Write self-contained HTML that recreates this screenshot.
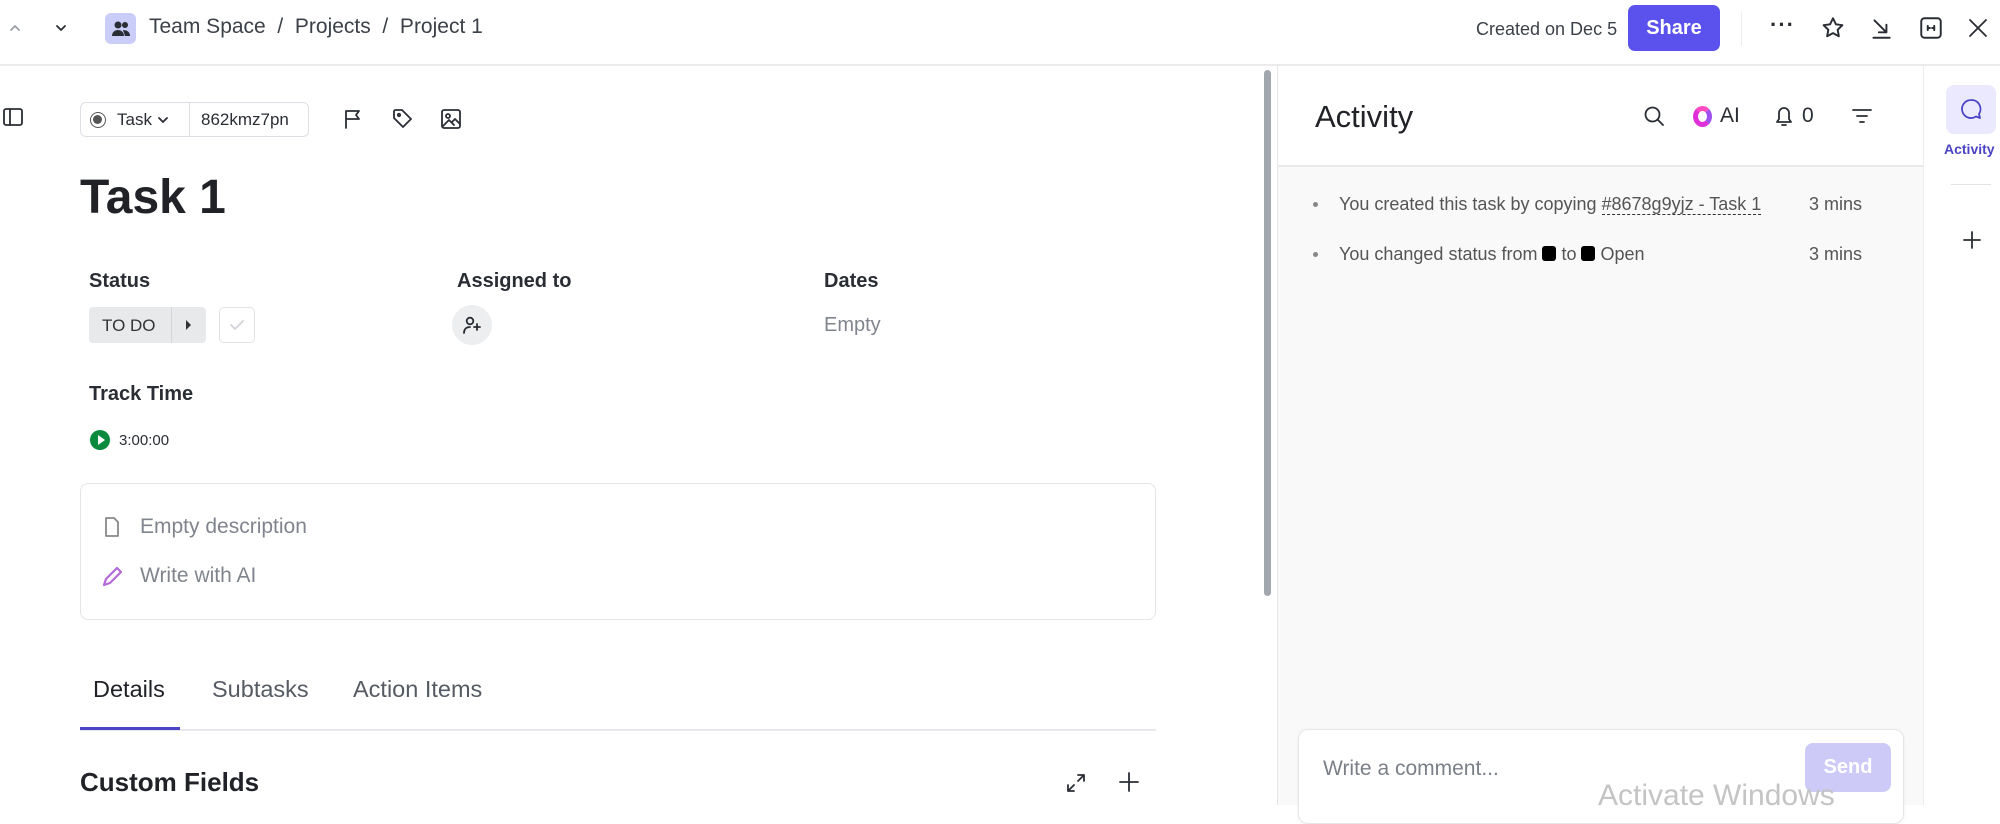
<!DOCTYPE html>
<html><head><meta charset="utf-8"><style>
*{box-sizing:border-box;margin:0;padding:0}
body{width:2000px;height:805px;overflow:hidden;background:#fff;font-family:"Liberation Sans",sans-serif;color:#2a2e34;position:relative}
.a{position:absolute}
.t{white-space:nowrap}
svg{position:absolute;fill:none;stroke:#2a2e34;stroke-width:1.8;stroke-linecap:round;stroke-linejoin:round}
</style></head><body>
<div class="a" style="left:0;top:64px;width:2000px;height:2px;background:#ebebeb"></div>
<svg style="left:8px;top:22px" width="14" height="12" viewBox="0 0 14 12"><path d="M3 8l4-4 4 4" stroke="#9aa0a6"/></svg>
<svg style="left:54px;top:22px" width="14" height="12" viewBox="0 0 14 12"><path d="M3 4l4 4 4-4"/></svg>
<div class="a" style="left:105px;top:13px;width:31px;height:31px;border-radius:6px;background:#c9cdf7"></div>
<svg style="left:109px;top:17px" width="24" height="24" viewBox="0 0 24 24"><circle cx="9" cy="8" r="3.5" fill="#2a2e34" stroke="none"/><circle cx="16" cy="8" r="3" fill="#2a2e34" stroke="none"/><path d="M3 19c0-4 3-6 6-6s6 2 6 6z" fill="#2a2e34" stroke="none"/><path d="M14 13c4 0 7 2 7 6h-5" fill="#2a2e34" stroke="none"/></svg>
<div class="a t" style="left:149px;top:15px;font-size:21px;color:#3c4048">Team Space&nbsp; /&nbsp; Projects&nbsp; /&nbsp; Project 1</div>
<div class="a t" style="left:1476px;top:19px;font-size:18px;color:#3c4048">Created on Dec 5</div>
<div class="a t" style="left:1628px;top:5px;width:92px;height:46px;border-radius:7px;background:#5b52ee;color:#fff;font-size:20px;font-weight:bold;text-align:center;line-height:46px">Share</div>
<div class="a" style="left:1741px;top:12px;width:1px;height:34px;background:#eee"></div>
<div class="a t" style="left:1770px;top:12px;font-size:22px;font-weight:bold;letter-spacing:1px">···</div>
<svg style="left:1820px;top:15px" width="26" height="26" viewBox="0 0 24 24"><path d="M12 3l2.7 5.6 6 .8-4.4 4.2 1.1 6-5.4-2.9-5.4 2.9 1.1-6L3.3 9.4l6-.8z"/></svg>
<svg style="left:1868px;top:15px" width="26" height="26" viewBox="0 0 24 24"><path d="M6 5l11 11M17 9v7h-7M5 21h15"/></svg>
<svg style="left:1918px;top:15px" width="26" height="26" viewBox="0 0 24 24"><rect x="3" y="3" width="18" height="18" rx="3"/><path d="M9 10v4M15 10v4M11 12h-1M13 12h1"/></svg>
<svg style="left:1966px;top:16px" width="24" height="24" viewBox="0 0 24 24"><path d="M4 4l16 16M20 4L4 20"/></svg>

<svg style="left:2px;top:106px" width="22" height="22" viewBox="0 0 22 22"><rect x="2" y="3" width="18" height="16" rx="2"/><path d="M8 3v16"/></svg>
<div class="a" style="left:80px;top:102px;width:229px;height:35px;border:1px solid #dcdfe4;border-radius:6px"></div>
<div class="a" style="left:189px;top:102px;width:1px;height:35px;background:#dcdfe4"></div>
<div class="a" style="left:90px;top:112px;width:16px;height:16px;border-radius:50%;border:1.5px solid #555;padding:2px"><div style="width:9px;height:9px;border-radius:50%;background:#555"></div></div>
<div class="a t" style="left:117px;top:110px;font-size:17px">Task</div>
<svg style="left:157px;top:114px" width="12" height="12" viewBox="0 0 12 12"><path d="M2 4l4 4 4-4"/></svg>
<div class="a t" style="left:201px;top:110px;font-size:17px">862kmz7pn</div>
<svg style="left:342px;top:107px" width="22" height="24" viewBox="0 0 22 24"><path d="M4 21V4h13l-3 4 3 4H4"/></svg>
<svg style="left:391px;top:107px" width="24" height="24" viewBox="0 0 24 24"><path d="M3 4v7l9 9 8-8-9-9H4z"/><circle cx="8" cy="8" r="1.2"/></svg>
<svg style="left:439px;top:107px" width="24" height="24" viewBox="0 0 24 24"><rect x="3" y="3" width="18" height="18" rx="2"/><circle cx="9" cy="9" r="2"/><path d="M4 19l6-6 5 5M13 15l3-3 5 5"/></svg>
<div class="a t" style="left:80px;top:170px;font-size:48px;font-weight:bold;color:#202227">Task 1</div>

<div class="a t" style="left:89px;top:270px;font-size:20px;font-weight:bold">Status</div>
<div class="a t" style="left:457px;top:270px;font-size:20px;font-weight:bold">Assigned to</div>
<div class="a t" style="left:824px;top:270px;font-size:20px;font-weight:bold">Dates</div>
<div class="a" style="left:89px;top:307px;width:117px;height:36px;background:#e8e9eb;border-radius:4px"></div>
<div class="a" style="left:171px;top:307px;width:1px;height:36px;background:#d3d5d8"></div>
<div class="a t" style="left:102px;top:316px;font-size:17px;color:#333">TO DO</div>
<div class="a" style="left:186px;top:320px;width:0;height:0;border-left:5px solid #333;border-top:5px solid transparent;border-bottom:5px solid transparent"></div>
<div class="a" style="left:219px;top:307px;width:36px;height:36px;border:1.5px solid #e0e2e5;border-radius:5px"></div>
<svg style="left:228px;top:317px" width="18" height="16" viewBox="0 0 18 16"><path d="M3 8l4 4 8-8" stroke="#d0d3d7"/></svg>
<div class="a" style="left:452px;top:305px;width:40px;height:40px;border-radius:50%;background:#eceef0"></div>
<svg style="left:462px;top:315px" width="20" height="20" viewBox="0 0 20 20"><circle cx="8" cy="6" r="3.3"/><path d="M2 18c0-4 2.5-6 6-6M15 9v6M12 12h6"/></svg>
<div class="a t" style="left:824px;top:314px;font-size:20px;color:#80858d">Empty</div>
<div class="a t" style="left:89px;top:383px;font-size:20px;font-weight:bold">Track Time</div>
<div class="a" style="left:90px;top:430px;width:20px;height:20px;border-radius:50%;background:#0b8a3e"></div>
<div class="a" style="left:98px;top:435px;border-left:7px solid #fff;border-top:5px solid transparent;border-bottom:5px solid transparent"></div>
<div class="a t" style="left:119px;top:432px;font-size:15px">3:00:00</div>

<div class="a" style="left:80px;top:483px;width:1076px;height:137px;border:1px solid #e3e5e8;border-radius:8px"></div>
<svg style="left:102px;top:516px" width="20" height="22" viewBox="0 0 20 22"><path d="M4 2h8l4 4v14H4z" stroke="#888"/></svg>
<div class="a t" style="left:140px;top:515px;font-size:21px;color:#80858d">Empty description</div>
<svg style="left:100px;top:565px" width="24" height="24" viewBox="0 0 24 24"><path d="M4 20l2-6L17 3l4 4-11 11z" stroke="#b36ad9" stroke-width="2.2"/></svg>
<div class="a t" style="left:140px;top:564px;font-size:21px;color:#80858d">Write with AI</div>

<div class="a t" style="left:93px;top:676px;font-size:23.5px;color:#202227">Details</div>
<div class="a t" style="left:212px;top:676px;font-size:23.5px;color:#565b63">Subtasks</div>
<div class="a t" style="left:353px;top:676px;font-size:23.5px;color:#565b63">Action Items</div>
<div class="a" style="left:80px;top:729px;width:1076px;height:2px;background:#e6e8eb"></div>
<div class="a" style="left:80px;top:727px;width:100px;height:3px;background:#4b44c4"></div>
<div class="a t" style="left:80px;top:767px;font-size:26px;font-weight:bold;color:#202227">Custom Fields</div>
<svg style="left:1065px;top:772px" width="22" height="22" viewBox="0 0 22 22"><path d="M13 3h6v6M19 3l-6 6M9 19H3v-6M3 19l6-6"/></svg>
<svg style="left:1118px;top:771px" width="22" height="22" viewBox="0 0 22 22"><path d="M11 2v18M2 11h18"/></svg>
<div class="a" style="left:1264px;top:70px;width:7px;height:526px;border-radius:4px;background:#a2a6ad"></div>

<div class="a" style="left:1277px;top:66px;width:1px;height:739px;background:#e6e6e6"></div>
<div class="a" style="left:1278px;top:167px;width:645px;height:638px;background:#f9f9f9"></div>
<div class="a" style="left:1278px;top:165px;width:645px;height:2px;background:#e9e9e9"></div>
<div class="a" style="left:1923px;top:66px;width:1px;height:739px;background:#ebebeb"></div>
<div class="a t" style="left:1315px;top:99px;font-size:31px;color:#202227">Activity</div>
<svg style="left:1642px;top:104px" width="24" height="24" viewBox="0 0 24 24"><circle cx="10.5" cy="10.5" r="7"/><path d="M16 16l5 5"/></svg>
<div class="a" style="left:1693px;top:106px;width:19px;height:21px;border-radius:50%;border:5px solid #e02fd8;border-right-color:#a050f0;border-top-color:#ff4ac0"></div>
<div class="a t" style="left:1720px;top:104px;font-size:21px">AI</div>
<svg style="left:1773px;top:104px" width="22" height="24" viewBox="0 0 22 24"><path d="M4 18h14l-2-3V9a5 5 0 0 0-10 0v6zM9 21h4"/></svg>
<div class="a t" style="left:1802px;top:104px;font-size:21px">0</div>
<svg style="left:1850px;top:106px" width="24" height="20" viewBox="0 0 24 20"><path d="M3 4h18M7 10h10M10 16h4"/></svg>

<div class="a" style="left:1313px;top:202px;width:5px;height:5px;border-radius:50%;background:#888"></div>
<div class="a t" style="left:1339px;top:194px;font-size:18px;color:#555">You created this task by copying <span style="border-bottom:1.5px dashed #333;color:#555">#8678g9yjz - Task 1</span></div>
<div class="a t" style="left:1809px;top:194px;font-size:18px;color:#555">3 mins</div>
<div class="a" style="left:1313px;top:252px;width:5px;height:5px;border-radius:50%;background:#888"></div>
<div class="a t" style="left:1339px;top:244px;font-size:18px;color:#555">You changed status from <span style="display:inline-block;width:14px;height:15px;background:#000;border-radius:3px;vertical-align:-1px"></span> to <span style="display:inline-block;width:14px;height:15px;background:#000;border-radius:3px;vertical-align:-1px"></span> Open</div>
<div class="a t" style="left:1809px;top:244px;font-size:18px;color:#555">3 mins</div>

<div class="a" style="left:1298px;top:729px;width:606px;height:95px;background:#fff;border:1px solid #e6e6e6;border-radius:10px;box-shadow:0 1px 4px rgba(0,0,0,.05)"></div>
<div class="a t" style="left:1323px;top:757px;font-size:21px;color:#7b8088">Write a comment...</div>
<div class="a t" style="left:1805px;top:743px;width:86px;height:49px;border-radius:8px;background:#cdcaf8;color:#fff;font-size:20px;font-weight:bold;text-align:center;line-height:49px">Send</div>
<div class="a t" style="left:1598px;top:779px;font-size:30px;color:#c4c4c4">Activate Windows</div>

<div class="a" style="left:1946px;top:85px;width:50px;height:49px;border-radius:8px;background:#ebe9fd"></div>
<svg style="left:1958px;top:97px" width="26" height="26" viewBox="0 0 26 26"><path d="M13 3a9 9 0 1 0 5 16.5l4 1.5-1-4A9 9 0 0 0 13 3z" stroke="#4b44c4"/></svg>
<div class="a t" style="left:1944px;top:141px;font-size:14px;color:#4b44c4;font-weight:bold">Activity</div>
<div class="a" style="left:1951px;top:184px;width:40px;height:1px;background:#e3e3e3"></div>
<svg style="left:1962px;top:230px" width="20" height="20" viewBox="0 0 20 20"><path d="M10 2v16M2 10h16"/></svg>
</body></html>
